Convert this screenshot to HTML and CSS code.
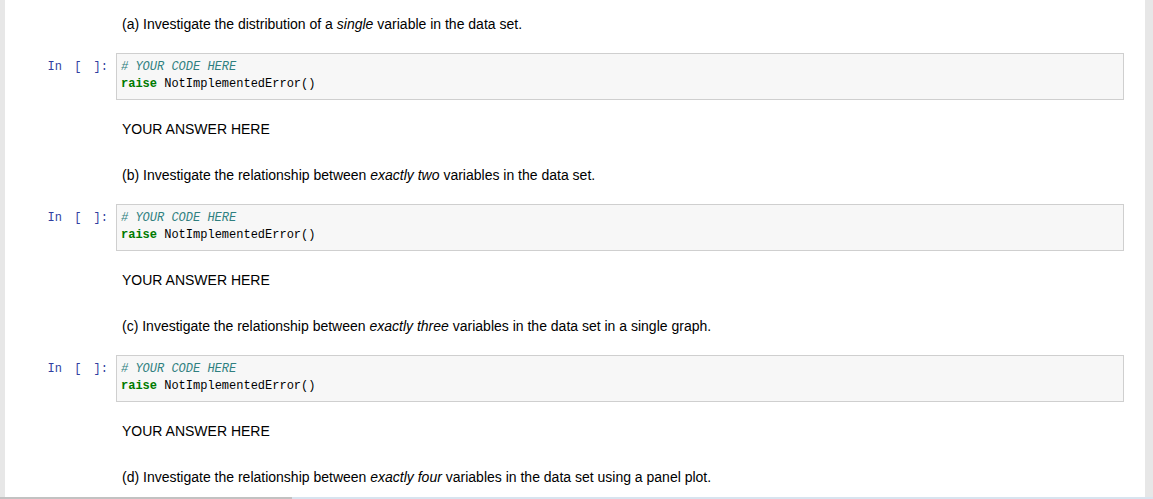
FILE: index.html
```html
<!DOCTYPE html>
<html>
<head>
<meta charset="utf-8">
<link rel="stylesheet" href="styles.css">
</head>
<body>
<div class="app">
  <div class="page">
    <div class="cell md"><div class="prompt"></div><div class="md-text">(a) Investigate the distribution of a <em>single</em> variable in the data set.</div></div>
    <div class="cell code"><div class="prompt">In [ ]:</div><div class="input"><div class="c-line"><span class="cm"># YOUR CODE HERE</span></div><div class="c-line"><span class="kw">raise</span> NotImplementedError()</div></div></div>
    <div class="cell md"><div class="prompt"></div><div class="md-text">YOUR ANSWER HERE</div></div>
    <div class="cell md"><div class="prompt"></div><div class="md-text">(b) Investigate the relationship between <em>exactly two</em> variables in the data set.</div></div>
    <div class="cell code"><div class="prompt">In [ ]:</div><div class="input"><div class="c-line"><span class="cm"># YOUR CODE HERE</span></div><div class="c-line"><span class="kw">raise</span> NotImplementedError()</div></div></div>
    <div class="cell md"><div class="prompt"></div><div class="md-text">YOUR ANSWER HERE</div></div>
    <div class="cell md"><div class="prompt"></div><div class="md-text">(c) Investigate the relationship between <em>exactly three</em> variables in the data set in a single graph.</div></div>
    <div class="cell code"><div class="prompt">In [ ]:</div><div class="input"><div class="c-line"><span class="cm"># YOUR CODE HERE</span></div><div class="c-line"><span class="kw">raise</span> NotImplementedError()</div></div></div>
    <div class="cell md"><div class="prompt"></div><div class="md-text">YOUR ANSWER HERE</div></div>
    <div class="cell md"><div class="prompt"></div><div class="md-text">(d) Investigate the relationship between <em>exactly four</em> variables in the data set using a panel plot.</div></div>
  </div>
  <div class="hbar"><span class="seg-gray"></span><span class="seg-blue"></span></div>
</div>
</body>
</html>
```
FILE: styles.css
```css
html, body {
  margin: 0;
  padding: 0;
}
body {
  width: 1153px;
  height: 499px;
  overflow: hidden;
  background: #e7e7e7;
  font-family: "Liberation Sans", Arial, sans-serif;
}
.app {
  display: flex;
  flex-direction: column;
  height: 499px;
}
.page {
  margin-left: 5px;
  width: 1140px;
  height: 497px;
  background: #ffffff;
  overflow: hidden;
  display: flex;
  flex-direction: column;
  gap: 12px;
  padding-top: 7px;
  box-sizing: border-box;
}
.cell {
  display: flex;
  flex-direction: row;
  flex-shrink: 0;
}
.prompt {
  width: 111px;
  flex-shrink: 0;
  box-sizing: border-box;
  padding-right: 8px;
  text-align: right;
  font-family: "Liberation Mono", monospace;
  font-size: 12px;
  color: #303f9f;
  white-space: pre;
  word-spacing: 5px;
  padding-top: 6px;
  line-height: 17px;
}
.md-text {
  padding: 7px 0 7px 6px;
  font-size: 14px;
  line-height: 20px;
  color: #000;
}
.md-text em {
  font-style: italic;
}
.input {
  width: 1008px;
  height: 47px;
  box-sizing: border-box;
  border: 1px solid #cfcfcf;
  background: #f7f7f7;
  padding: 5px 4px 6px 4px;
  font-family: "Liberation Mono", monospace;
  font-size: 12px;
  line-height: 17px;
  color: #000;
}
.c-line {
  white-space: pre;
}
.cm {
  color: #2f7f7f;
  font-style: italic;
}
.kw {
  color: #007a00;
  font-weight: bold;
}
.hbar {
  display: flex;
  height: 2px;
}
.seg-gray {
  width: 292px;
  background: #c2c2c2;
}
.seg-blue {
  flex: 1;
  background: #d8e4ef;
}
```
